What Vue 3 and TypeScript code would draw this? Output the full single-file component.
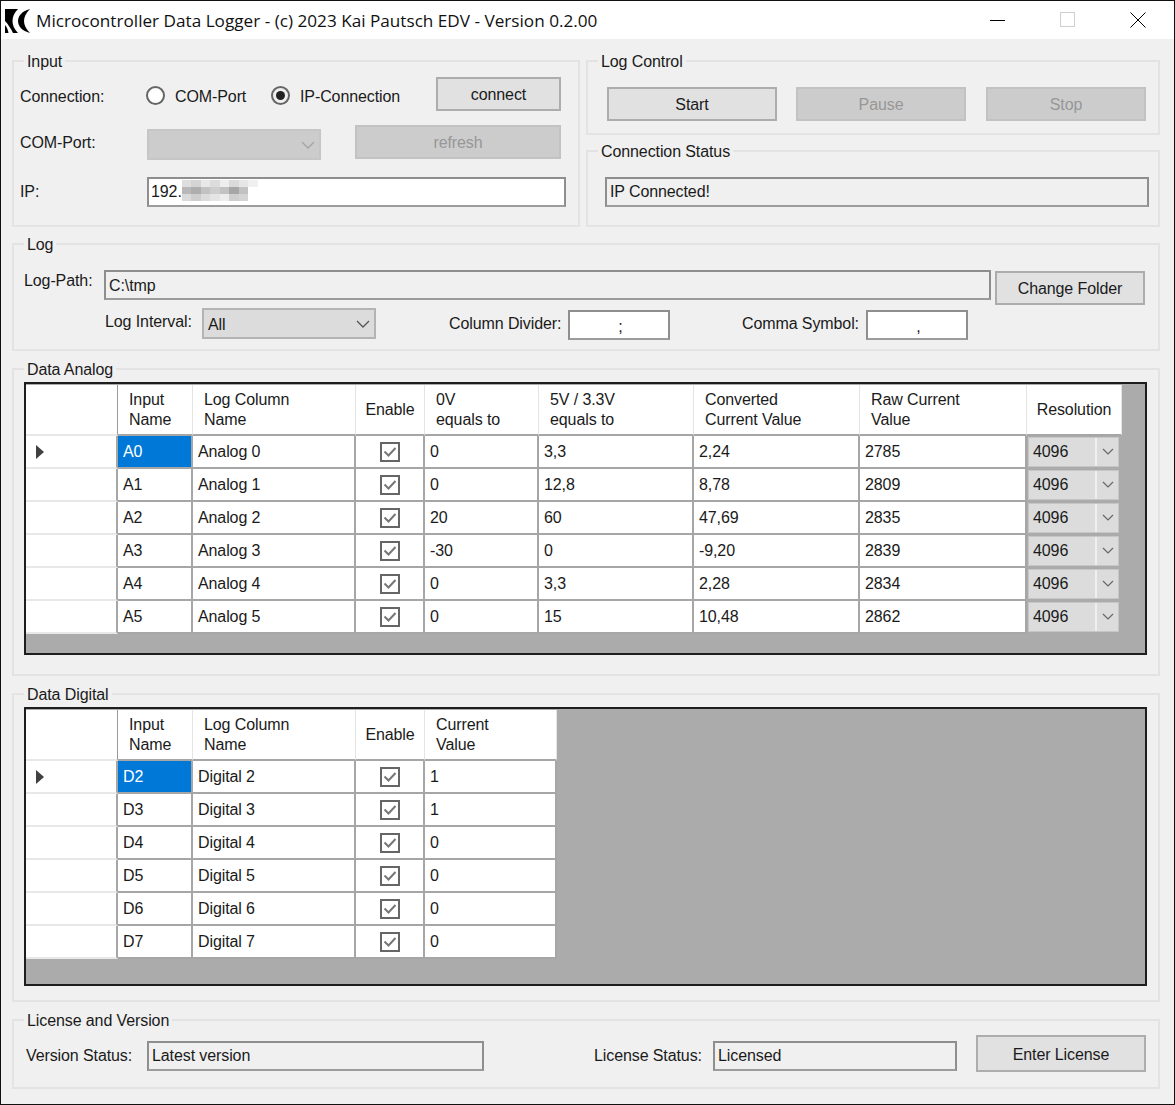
<script setup lang="ts">
interface Col {
  label: string[]
  width: number
  center?: boolean
}

interface GridDef {
  name: string
  cols: Col[]
  rows: (string | boolean)[][]
  combo: boolean
}

const analogCols: Col[] = [
  { label: ['Input', 'Name'], width: 75 },
  { label: ['Log Column', 'Name'], width: 163 },
  { label: ['Enable'], width: 69, center: true },
  { label: ['0V', 'equals to'], width: 114 },
  { label: ['5V / 3.3V', 'equals to'], width: 155 },
  { label: ['Converted', 'Current Value'], width: 166 },
  { label: ['Raw Current', 'Value'], width: 167 },
  { label: ['Resolution'], width: 95, center: true }
]

const digitalCols: Col[] = [
  { label: ['Input', 'Name'], width: 75 },
  { label: ['Log Column', 'Name'], width: 163 },
  { label: ['Enable'], width: 69, center: true },
  { label: ['Current', 'Value'], width: 132 }
]

const grids: GridDef[] = [
  {
    name: 'Data Analog',
    cols: analogCols,
    combo: true,
    rows: [
      ['A0', 'Analog 0', true, '0', '3,3', '2,24', '2785', '4096'],
      ['A1', 'Analog 1', true, '0', '12,8', '8,78', '2809', '4096'],
      ['A2', 'Analog 2', true, '20', '60', '47,69', '2835', '4096'],
      ['A3', 'Analog 3', true, '-30', '0', '-9,20', '2839', '4096'],
      ['A4', 'Analog 4', true, '0', '3,3', '2,28', '2834', '4096'],
      ['A5', 'Analog 5', true, '0', '15', '10,48', '2862', '4096']
    ]
  },
  {
    name: 'Data Digital',
    cols: digitalCols,
    combo: false,
    rows: [
      ['D2', 'Digital 2', true, '1'],
      ['D3', 'Digital 3', true, '1'],
      ['D4', 'Digital 4', true, '0'],
      ['D5', 'Digital 5', true, '0'],
      ['D6', 'Digital 6', true, '0'],
      ['D7', 'Digital 7', true, '0']
    ]
  }
]

// blurred part of the address, row by row
const blur: string[] = [
  '#dedede', '#d4d4d4', '#e8e8e8', '#dcdcdc', '#eeeeee', '#dadada', '#e6e6e6', '#f0f0f0',
  '#b8b8b8', '#aeaeae', '#c2c2c2', '#cecece', '#c2c2c2', '#a6a6a6', '#c2c2c2', '#ffffff',
  '#dadada', '#cecece', '#dcdcdc', '#e4e4e4', '#ededed', '#cecece', '#d4d4d4', '#ffffff'
]
</script>

<template>
  <div class="window">
    <div class="titlebar">
      <svg class="logo" width="26" height="24" viewBox="0 0 26 24">
        <path d="M0 0H13C9 4 7.500 8 7.500 12C7.500 16 9 20 13 24H8C6 20 3 15 0 12Z" fill="#000" />
        <path d="M0 16C2 18 3 21 3.500 24H0Z" fill="#000" />
        <path d="M25 0C17 2 13 7 13 12C13 17 17 22 25 24C21 20 19 16 19 12C19 8 21 4 25 0Z" fill="#000" />
      </svg>
      <span class="title">Microcontroller Data Logger - (c) 2023 Kai Pautsch EDV - Version 0.2.00</span>
      <div class="winbtns">
        <svg width="16" height="16" viewBox="0 0 16 16"><path d="M0 8.500H15" stroke="#000" /></svg>
        <svg width="16" height="16" viewBox="0 0 16 16"><rect x="0.500" y="0.500" width="14" height="14" fill="none" stroke="#cfcfcf" /></svg>
        <svg width="16" height="16" viewBox="0 0 16 16"><path d="M0.500 0.500L15.500 15.500M15.500 0.500L0.500 15.500" stroke="#000" /></svg>
      </div>
    </div>

    <div class="content">
      <div class="top">
        <fieldset class="group input-group">
          <legend>Input</legend>
          <div class="row row-conn">
            <span class="lbl w-conn">Connection:</span>
            <span class="radio first"></span>
            <span class="radio-text r1">COM-Port</span>
            <span class="radio on"></span>
            <span class="radio-text">IP-Connection</span>
            <button class="btn connect">connect</button>
          </div>
          <div class="row row-port">
            <span class="lbl w-conn">COM-Port:</span>
            <div class="combo off port-combo">
              <svg class="chev" width="14" height="8" viewBox="0 0 14 8"><path d="M1 1L7 7L13 1" fill="none" stroke="#a4a4a4" stroke-width="1.300" /></svg>
            </div>
            <button class="btn off refresh">refresh</button>
          </div>
          <div class="row row-ip">
            <span class="lbl w-conn">IP:</span>
            <div class="field white ip">
              <span>192.</span>
              <div class="blur">
                <i v-for="(c, i) in blur" :key="i" :style="{ background: c }"></i>
              </div>
            </div>
          </div>
        </fieldset>

        <div class="right">
          <fieldset class="group control-group">
            <legend>Log Control</legend>
            <div class="row control-row">
              <button class="btn start">Start</button>
              <button class="btn off pause">Pause</button>
              <button class="btn off stop">Stop</button>
            </div>
          </fieldset>
          <fieldset class="group status-group">
            <legend>Connection Status</legend>
            <div class="field status">IP Connected!</div>
          </fieldset>
        </div>
      </div>

      <fieldset class="group log-group">
        <legend>Log</legend>
        <div class="row log-row1">
          <span class="lbl log-path">Log-Path:</span>
          <div class="field path">C:\tmp</div>
          <button class="btn change">Change Folder</button>
        </div>
        <div class="row log-row2">
          <span class="lbl interval">Log Interval:</span>
          <div class="combo interval-combo">
            All
            <svg class="chev" width="14" height="8" viewBox="0 0 14 8"><path d="M1 1L7 7L13 1" fill="none" stroke="#555" stroke-width="1.300" /></svg>
          </div>
          <span class="lbl divider">Column Divider:</span>
          <div class="field white small">;</div>
          <span class="lbl comma">Comma Symbol:</span>
          <div class="field white small">,</div>
        </div>
      </fieldset>

      <fieldset v-for="g in grids" :key="g.name" class="group grid-group" :class="{ digital: !g.combo }">
        <legend>{{ g.name }}</legend>
        <div class="grid-box">
          <table>
            <colgroup>
              <col style="width: 92px" />
              <col v-for="c in g.cols" :key="c.label.join()" :style="{ width: c.width + 'px' }" />
            </colgroup>
            <thead>
              <tr>
                <th></th>
                <th v-for="c in g.cols" :key="c.label.join()" :class="{ center: c.center }">
                  <div v-for="l in c.label" :key="l">{{ l }}</div>
                </th>
              </tr>
            </thead>
            <tbody>
              <tr v-for="(row, ri) in g.rows" :key="ri">
                <td class="head">
                  <svg v-if="ri === 0" class="marker" width="8" height="14" viewBox="0 0 8 14"><path d="M0 0L8 7L0 14Z" fill="#404040" /></svg>
                </td>
                <td v-for="(v, ci) in row" :key="ci" :class="{ sel: ri === 0 && ci === 0, check: v === true, cc: g.combo && ci === 7 }">
                  <svg v-if="v === true" width="20" height="20" viewBox="0 0 20 20">
                    <rect x="1" y="1" width="18" height="18" fill="#fff" stroke="#666" stroke-width="2" />
                    <path d="M4.500 9.500L8.500 13.500L15.500 6" fill="none" stroke="#777" stroke-width="2" />
                  </svg>
                  <div v-else-if="g.combo && ci === 7" class="cell-combo">
                    <span>{{ v }}</span>
                    <b>
                      <svg width="12" height="7" viewBox="0 0 12 7"><path d="M1 1L6 6L11 1" fill="none" stroke="#666" stroke-width="1.200" /></svg>
                    </b>
                  </div>
                  <template v-else>{{ v }}</template>
                </td>
              </tr>
            </tbody>
          </table>
        </div>
      </fieldset>

      <fieldset class="group license-group">
        <legend>License and Version</legend>
        <div class="row">
          <span class="lbl version-lbl">Version Status:</span>
          <div class="field version">Latest version</div>
          <span class="lbl license-lbl">License Status:</span>
          <div class="field license">Licensed</div>
          <button class="btn enter">Enter License</button>
        </div>
      </fieldset>
    </div>
  </div>
</template>

<style>
html,
body {
  margin: 0;
  background: #f0f0f0;
}
</style>

<style scoped>
* {
  box-sizing: border-box;
}

.window {
  width: 1175px;
  height: 1105px;
  border: 1px solid #111;
  background: #f0f0f0;
  font-family: 'Liberation Sans', Arial, sans-serif;
  font-size: 16px;
  letter-spacing: -0.1px;
  color: #1a1a1a;
  overflow: hidden;
}

/* Title bar */
.titlebar {
  height: 38px;
  background: #fff;
  display: flex;
  align-items: center;
  padding-left: 4px;
}

.logo {
  flex: none;
  margin-top: 2px;
}

.title {
  margin-left: 5px;
  font-family: 'Open Sans', sans-serif;
  font-size: 17.160px;
  letter-spacing: 0;
  white-space: nowrap;
  color: #111;
}

.winbtns {
  margin-left: auto;
  display: flex;
  gap: 54px;
  padding-right: 28px;
}

/* Groups */
.content {
  padding: 12px 14px 0 11px;
  display: flex;
  flex-direction: column;
}

.group {
  --pad: 0px;
  margin: 0;
  padding: 0 0 0 var(--pad);
  border: 2px solid #e3e3e3;
  min-width: 0;
}

legend {
  padding: 0 3px;
  margin-left: calc(10px - var(--pad));
  height: 20px;
  line-height: 22px;
}

.row {
  display: flex;
  align-items: center;
}

.top {
  display: flex;
  gap: 6px;
}

.input-group {
  --pad: 6px;
  width: 568px;
  height: 176px;
  padding-top: 6px;
}

.right {
  width: 574px;
  display: flex;
  flex-direction: column;
  gap: 6px;
}

.control-group {
  --pad: 19px;
  height: 84px;
  padding-top: 16px;
}

.status-group {
  --pad: 17px;
  height: 86px;
  padding-top: 16px;
}

.log-group {
  --pad: 10px;
  height: 117px;
  margin-top: 7px;
  padding-top: 14px;
}

.grid-group {
  --pad: 10px;
  height: 317px;
  margin-top: 8px;
  padding-top: 3px;
}

.grid-group.digital {
  height: 318px;
  margin-top: 8px;
}

.license-group {
  --pad: 12px;
  height: 79px;
  margin-top: 8px;
}

/* Controls */
.lbl {
  white-space: nowrap;
}

.btn {
  font: inherit;
  letter-spacing: inherit;
  color: #1a1a1a;
  background: #e1e1e1;
  border: 2px solid #adadad;
  padding: 2px 0 0;
  flex: none;
}

.btn.off {
  background: #cccccc;
  border-color: #c2c2c2;
  color: #979797;
}

.field {
  background: #f0f0f0;
  border: 2px solid #8e8e8e;
  border-bottom-color: #9c9c9c;
  height: 30px;
  line-height: 26px;
  padding-left: 3px;
  flex: none;
}

.field.white {
  background: #fff;
}

.combo {
  position: relative;
  height: 31px;
  line-height: 29px;
  background: #dcdcdc;
  border: 2px solid #b4b4b4;
  padding-left: 4px;
  flex: none;
}

.combo.off {
  background: #cccccc;
  border-color: #c6c6c6;
}

.chev {
  position: absolute;
  right: 4px;
  top: 10px;
}

/* Input group */
.w-conn {
  width: 127px;
  flex: none;
}

.row-conn {
  height: 33px;
}

.row-conn .lbl,
.radio-text {
  margin-top: 7px;
}

.radio {
  width: 19px;
  height: 19px;
  flex: none;
  margin-top: 3px;
  border-radius: 50%;
  border: 2px solid #666;
  background: #fff;
  position: relative;
}

.radio.first {
  margin-left: -1px;
}

.radio.on {
  background: #f0f0f0;
}

.radio.on::after {
  content: '';
  position: absolute;
  left: 3px;
  top: 3px;
  width: 9px;
  height: 9px;
  border-radius: 50%;
  background: #222;
}

.radio-text {
  margin-left: 10px;
}

.r1 {
  width: 96px;
  flex: none;
}

.connect {
  margin-left: auto;
  margin-right: 17px;
  width: 125px;
  height: 34px;
}

.row-port {
  margin-top: 15px;
  height: 35px;
}

.port-combo {
  width: 174px;
  margin-top: 4px;
}

.refresh {
  margin-left: 34px;
  width: 206px;
  height: 34px;
  margin-top: -2px;
}

.row-ip {
  margin-top: 17px;
}

.ip {
  width: 419px;
  display: flex;
  padding-left: 2px;
}

.blur {
  display: grid;
  grid-template-columns: repeat(8, 9.500px);
  grid-auto-rows: 7px;
  margin: 1px 0 0 0;
}

.control-row {
  height: 34px;
}

.start,
.pause {
  width: 170px;
  height: 34px;
}

.pause {
  margin-left: 19px;
}

.stop {
  margin-left: 20px;
  width: 160px;
  height: 34px;
}

.status {
  width: 544px;
}

/* Log group */
.log-row1 {
  height: 34px;
}

.log-path {
  width: 80px;
  flex: none;
  margin-top: -8px;
}

.path {
  width: 887px;
  line-height: 28px;
}

.change {
  margin-left: 4px;
  width: 150px;
  height: 34px;
  margin-top: 5px;
}

.log-row2 {
  margin-top: 6px;
  height: 31px;
}

.interval {
  margin-left: 81px;
  width: 97px;
  flex: none;
  margin-top: -3px;
}

.interval-combo {
  width: 174px;
}

.divider {
  margin-left: 73px;
  width: 119px;
  flex: none;
}

.small {
  width: 102px;
  margin-top: 2px;
  text-align: center;
  line-height: 30px;
}

.comma {
  margin-left: 72px;
  width: 124px;
  flex: none;
}

/* Grids */
.grid-box {
  width: 1123px;
  height: 273px;
  background: #ababab;
  border: 2px solid #1e1e1e;
  overflow: hidden;
}

.digital .grid-box {
  height: 279px;
}

table {
  border-collapse: separate;
  border-spacing: 0;
  table-layout: fixed;
  width: max-content;
  margin-top: 1px;
}

th {
  height: 51px;
  background: #fff;
  font-weight: normal;
  text-align: left;
  padding: 0 0 0 11px;
  line-height: 19.500px;
  border-right: 1px solid #e4e4e4;
  border-bottom: 2px solid #a6a6a6;
}

th:first-child {
  border-bottom-color: #e8e8e8;
  border-right-color: #9a9a9a;
}

th.center {
  text-align: center;
  padding: 0;
}

td {
  height: 33px;
  background: #fff;
  padding: 0 0 0 5px;
  border-right: 2px solid #a6a6a6;
  border-bottom: 2px solid #a6a6a6;
  white-space: nowrap;
}

td.head {
  padding: 0 0 0 10px;
  border-bottom-color: #e8e8e8;
}

.marker {
  display: block;
}

td.sel {
  background: #0078d7;
  color: #fff;
}

td.check {
  padding: 0;
  text-align: center;
}

td.check svg {
  display: block;
  margin: 0 auto;
}

td.cc {
  padding: 0 0 0 1px;
  border-right: none;
  border-bottom: 2px solid #ababab;
  background: #ababab;
}

.cell-combo {
  width: 91px;
  height: 30px;
  background: #dcdcdc;
  border: 1px solid #c6c6c6;
  display: flex;
  align-items: center;
  padding-left: 4px;
}

.cell-combo span {
  flex: 1;
}

.cell-combo b {
  width: 23px;
  height: 100%;
  border-left: 2px solid #efefef;
  display: flex;
  align-items: center;
  justify-content: center;
}

/* License group */
.license-group .row {
  margin-top: 7px;
}

.version-lbl {
  width: 121px;
  flex: none;
  margin-top: 2px;
}

.version {
  width: 337px;
  margin-top: 2px;
}

.license-lbl {
  margin-left: 110px;
  width: 119px;
  flex: none;
  margin-top: 2px;
}

.license {
  width: 244px;
  margin-top: 2px;
}

.enter {
  margin-left: 19px;
  width: 170px;
  height: 37px;
  margin-top: -2px;
}
</style>
